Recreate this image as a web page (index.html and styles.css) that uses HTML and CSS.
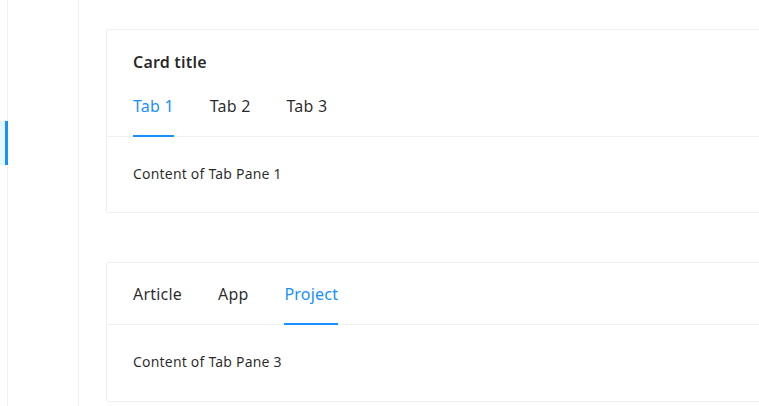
FILE: index.html
```html
<!DOCTYPE html>
<html lang="en">
<head>
<meta charset="utf-8">
<title>Card with tabs</title>
<link rel="stylesheet" href="styles.css">
</head>
<body>
<div class="layout">
  <aside class="side">
    <div class="menu-item menu-item-active"></div>
  </aside>
  <div class="gutter"></div>
  <main class="main">
    <section class="card">
      <div class="card-head card-head-titled">
        <div class="card-title">Card title</div>
        <nav class="tabs">
          <div class="tab tab-active">Tab 1</div>
          <div class="tab">Tab 2</div>
          <div class="tab">Tab 3</div>
        </nav>
      </div>
      <div class="card-body">Content of Tab Pane 1</div>
    </section>
    <section class="card">
      <div class="card-head">
        <nav class="tabs">
          <div class="tab">Article</div>
          <div class="tab">App</div>
          <div class="tab tab-active">Project</div>
        </nav>
      </div>
      <div class="card-body card-body-last">Content of Tab Pane 3</div>
    </section>
  </main>
</div>
</body>
</html>
```

FILE: styles.css
```css
html, body {
  margin: 0;
  padding: 0;
  background: #ffffff;
  overflow: hidden;
}

body {
  font-family: "Noto Sans", "Open Sans", "Liberation Sans", sans-serif;
  color: rgba(0, 0, 0, 0.85);
  letter-spacing: 0.2px;
  width: 759px;
  height: 406px;
}

.layout {
  display: flex;
  align-items: stretch;
  height: 406px;
}

.side {
  flex: 0 0 7px;
  width: 7px;
  border-right: 1px solid #f0f0f0;
}

.menu-item {
  box-sizing: border-box;
  width: 8px;
  height: 44px;
  margin-right: -1px;
}

.menu-item-active {
  margin-top: 121px;
  background: #e6f7ff;
  border-right: 3px solid #1890ff;
}

.gutter {
  flex: 0 0 70px;
  border-right: 1px solid #f0f0f0;
}

.main {
  flex: 0 0 auto;
  padding: 29px 0 0 27px;
  display: flex;
  flex-direction: column;
  gap: 49px;
}

.card {
  width: 720px;
  background: #ffffff;
  border: 1px solid #f0f0f0;
  border-radius: 2px;
}

.card-head {
  padding: 0 26px;
  border-bottom: 1px solid #f0f0f0;
}

.card-head-titled {
  padding-top: 20px;
}

.card-title {
  font-size: 16px;
  line-height: 24px;
  font-weight: 600;
  color: rgba(0, 0, 0, 0.85);
}

.tabs {
  display: flex;
  gap: 36px;
  margin-top: 8px;
}

.card-head-titled .tabs {
  margin-top: 9px;
}

.tab {
  position: relative;
  font-size: 16px;
  line-height: 24px;
  padding: 11px 0 18px;
  color: rgba(0, 0, 0, 0.85);
}

.tab-active {
  color: #1890ff;
}

.tab-active::after {
  content: "";
  position: absolute;
  left: 0;
  right: 0;
  bottom: -1px;
  height: 2px;
  background: #1890ff;
}

.card-body {
  padding: 26px 26px 27px;
  font-size: 14px;
  line-height: 22px;
  color: rgba(0, 0, 0, 0.85);
}

.card-body-last {
  padding-bottom: 28px;
}
```
